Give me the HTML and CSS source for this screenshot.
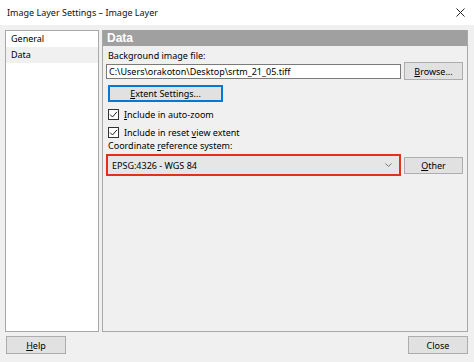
FILE: index.html
```html
<!DOCTYPE html>
<html lang="en">
<head>
  <meta charset="UTF-8">
  <title>Image Layer Settings</title>
  <link rel="stylesheet" href="styles.css">
</head>
<body>
  <div class="window">
    <div class="titlebar">
      <span class="title">Image Layer Settings – Image Layer</span>
      <span class="close-x">
        <svg width="9" height="9" viewBox="0 0 9 9"><path d="M0.5 0.5 L8.5 8.5 M8.5 0.5 L0.5 8.5" stroke="#222" stroke-width="1" fill="none"/></svg>
      </span>
    </div>

    <div class="main">
      <div class="nav">
        <div class="nav-item">General</div>
        <div class="nav-item selected">Data</div>
      </div>

      <div class="panel">
        <div class="panel-header">Data</div>
        <div class="panel-body">
          <div class="label">Background image file:</div>
          <div class="row">
            <div class="textbox">C:\Users\orakoton\Desktop\srtm_21_05.tiff</div>
            <button class="btn"><u>B</u>rowse...</button>
          </div>
          <button class="btn btn-focus"><u>E</u>xtent Settings...</button>
          <label class="check"><span class="box">
            <svg width="9" height="9" viewBox="0 0 9 9"><path d="M1 4.5 L3.5 7 L8 1.8" stroke="#222" stroke-width="1" fill="none"/></svg>
          </span><span><u>I</u>nclude in auto-zoom</span></label>
          <label class="check"><span class="box">
            <svg width="9" height="9" viewBox="0 0 9 9"><path d="M1 4.5 L3.5 7 L8 1.8" stroke="#222" stroke-width="1" fill="none"/></svg>
          </span><span>Include in reset <u>v</u>iew extent</span></label>
          <div class="label crs-label">Coordinate <u>r</u>eference system:</div>
          <div class="row crs-row">
            <div class="combo">
              <span>EPSG:4326 - WGS 84</span>
              <svg width="7" height="4" viewBox="0 0 7 4"><path d="M0.5 0.5 L3.5 3.5 L6.5 0.5" stroke="#777" stroke-width="1" fill="none"/></svg>
            </div>
            <button class="btn btn-other"><u>O</u>ther</button>
          </div>
        </div>
      </div>
    </div>

    <div class="footer">
      <button class="btn btn-foot"><u>H</u>elp</button>
      <button class="btn btn-foot">Close</button>
    </div>
  </div>
</body>
</html>
```

FILE: styles.css
```css
body {
  margin: 0;
  background: #f0f0f0;
  font-family: "Noto Sans", "Liberation Sans", sans-serif;
  font-size: 9px;
  color: #000;
}
.window {
  width: 474px;
  height: 362px;
  display: flex;
  flex-direction: column;
}
.titlebar {
  height: 25px;
  background: #fff;
  display: flex;
  align-items: center;
  justify-content: space-between;
  padding: 0 9px 0 7px;
  font-size: 9px;
  color: #111;
}
.close-x {
  display: flex;
  margin-top: -1px;
}
.main {
  display: flex;
  height: 302px;
  padding: 5px 6px 0 5px;
  gap: 3px;
}
.nav {
  width: 92px;
  background: #fff;
  border: 1px solid #a8a8a8;
}
.nav-item {
  height: 16px;
  line-height: 16px;
  padding-left: 5px;
}
.nav-item.selected {
  background: #f0f0f0;
}
.panel {
  flex: 1;
  border: 1px solid #a8a8a8;
  border-top: none;
  display: flex;
  flex-direction: column;
}
.panel-header {
  background: #a0a0a0;
  color: #fff;
  font-family: "Liberation Sans", Arial, sans-serif;
  font-weight: bold;
  font-size: 12px;
  height: 16px;
  line-height: 16px;
  padding-left: 4px;
}
.panel-body {
  padding: 4px 4px 0 3px;
  display: flex;
  flex-direction: column;
  align-items: flex-start;
}
.label {
  height: 12px;
  line-height: 12px;
  padding-left: 2px;
}
.row {
  display: flex;
  align-items: center;
  gap: 3px;
  width: 100%;
  height: 18px;
}
.textbox {
  flex: 1;
  height: 13px;
  line-height: 13px;
  background: #fff;
  border: 1px solid #7a7a7a;
  padding-left: 2px;
  white-space: nowrap;
}
.btn {
  font-family: inherit;
  font-size: 9px;
  background: #e1e1e1;
  border: 1px solid #adadad;
  height: 18px;
  width: 59px;
  padding: 0;
  color: #000;
}
.btn-focus {
  width: 115px;
  height: 17px;
  margin: 5px 0 0 2px;
  border: 1px solid #0078d7;
  box-shadow: inset 0 0 0 1px #0078d7;
}
.check {
  display: flex;
  align-items: center;
  gap: 5px;
  height: 12px;
  margin: 6px 0 0 2px;
}
.box {
  width: 9px;
  height: 9px;
  border: 1px solid #333;
  background: #fff;
  display: flex;
}
.crs-label {
  margin-top: 2px;
}
.crs-row {
  margin-top: 2px;
  height: 22px;
}
.combo {
  flex: 1;
  height: 18px;
  border: 2px solid #e0301e;
  background: #e6e6e6;
  display: flex;
  align-items: center;
  justify-content: space-between;
  padding: 0 7px 0 4px;
}
.btn-other {
  height: 17px;
}
.footer {
  display: flex;
  justify-content: space-between;
  padding: 4px 6px 0 6px;
}
.btn-foot {
  width: 60px;
  height: 18px;
}
```
